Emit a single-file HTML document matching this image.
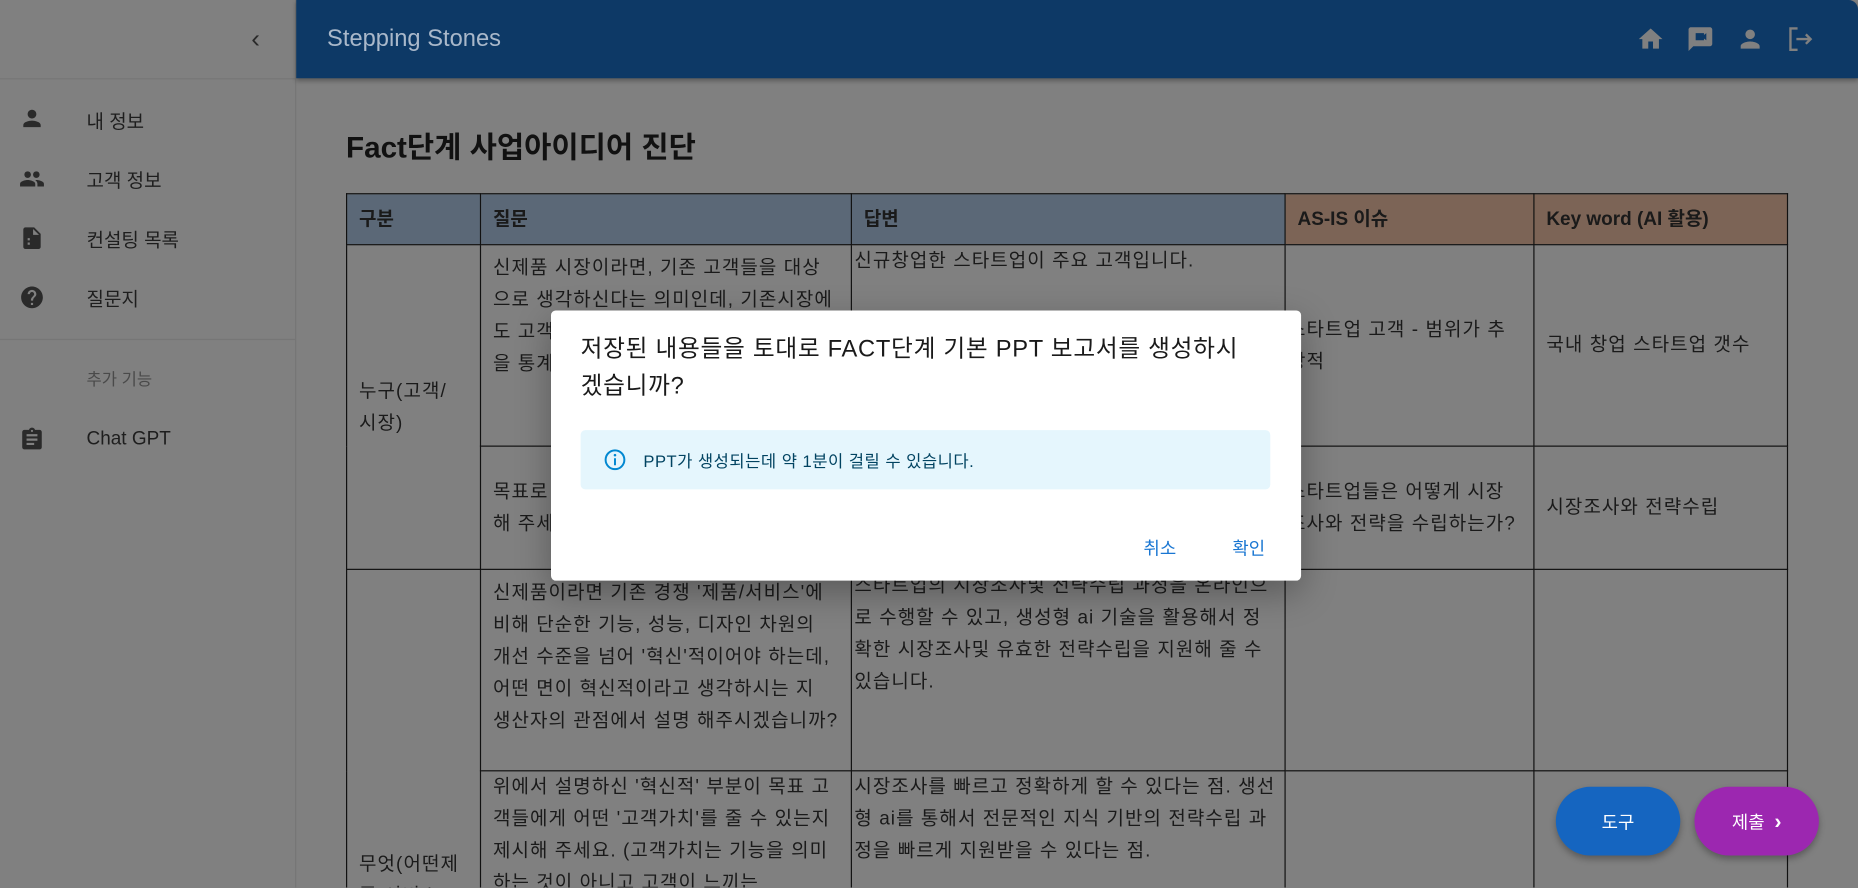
<!DOCTYPE html>
<html><head><meta charset="utf-8"><style>
html,body{margin:0;padding:0;width:1858px;height:887px;overflow:hidden;background:#808080;}
#w{position:absolute;left:0;top:0;width:1568px;height:749px;overflow:hidden;transform:scale(1.18495);transform-origin:0 0;font-family:"Liberation Sans","Noto Sans CJK KR",sans-serif;color:#1a1a1a;}
.abs{position:absolute}
#side{left:0;top:0;width:249px;height:749px;background:#808080;border-right:1px solid #767676;}
#bar{left:250px;top:0;width:1318px;height:66px;background:#0d3966;box-shadow:0 2px 4px rgba(0,0,0,.3);border-top-right-radius:8px}
.mi{position:absolute;left:73px;font-size:16px;color:#1e1e1e}
.ic{position:absolute;left:16px;width:22px;height:22px}
table{position:absolute;left:292px;top:163px;border-collapse:collapse;font-size:16px;line-height:27px;letter-spacing:0.9px;table-layout:fixed}
td,th{border:1px solid #111;vertical-align:top;padding:0 10px;text-align:left;overflow:hidden}
th{height:42px;vertical-align:middle;font-weight:bold;font-size:16px;letter-spacing:0}
.b{background:#5b6877}.p{background:#7c6456}
#dlg{left:465px;top:262px;width:633px;height:228px;background:#fff;border-radius:4px;box-shadow:0 10px 30px rgba(0,0,0,.3)}
.fab{position:absolute;top:664px;width:105px;height:58px;border-radius:29px;color:#fff;font-size:15px;display:flex;align-items:center;justify-content:center;box-shadow:0 3px 6px rgba(0,0,0,.3)}
</style></head><body><div id="w">
<div class="abs" id="side">
 <div class="abs" style="left:212px;top:20px;font-size:22px;color:#2a2a2a">&#8249;</div>
 <div class="abs" style="left:0;top:66px;width:249px;height:1px;background:#767676"></div>
 <svg class="ic" style="top:89px" viewBox="0 0 24 24"><path fill="#2a2a2a" d="M12 12c2.2 0 4-1.8 4-4s-1.8-4-4-4-4 1.8-4 4 1.8 4 4 4zm0 2c-2.7 0-8 1.3-8 4v2h16v-2c0-2.7-5.3-4-8-4z"/></svg>
 <div class="mi" style="top:89px">내 정보</div>
 <svg class="ic" style="top:140px" viewBox="0 0 24 24"><path fill="#2a2a2a" d="M16 11c1.7 0 3-1.3 3-3s-1.3-3-3-3-3 1.3-3 3 1.3 3 3 3zm-8 0c1.7 0 3-1.3 3-3S9.7 5 8 5 5 6.3 5 8s1.3 3 3 3zm0 2c-2.3 0-7 1.2-7 3.5V19h14v-2.5c0-2.3-4.7-3.5-7-3.5zm8 0c-.3 0-.6 0-1 .1 1.2.8 2 2 2 3.4V19h6v-2.5c0-2.3-4.700-3.5-7-3.5z"/></svg>
 <div class="mi" style="top:139px">고객 정보</div>
 <svg class="ic" style="top:190px" viewBox="0 0 24 24"><path fill="#2a2a2a" d="M14 2H6c-1.1 0-2 .9-2 2v16c0 1.1.9 2 2 2h12c1.1 0 2-.9 2-2V8l-6-6zm-1 7V3.5L18.5 9H13zM8 12h2v2H8zm0 4h2v2H8z"/></svg>
 <div class="mi" style="top:189px">컨설팅 목록</div>
 <svg class="ic" style="top:240px" viewBox="0 0 24 24"><path fill="#2a2a2a" d="M12 2C6.5 2 2 6.5 2 12s4.5 10 10 10 10-4.5 10-10S17.5 2 12 2zm1 17h-2v-2h2v2zm2.1-7.8l-.9.9C13.5 12.9 13 13.5 13 15h-2v-.5c0-1.100.4-2.100 1.2-2.8l1.2-1.3c.4-.4.6-.9.6-1.4 0-1.1-.9-2-2-2s-2 .9-2 2H8c0-2.2 1.8-4 4-4s4 1.8 4 4c0 .9-.4 1.7-.9 2.2z"/></svg>
 <div class="mi" style="top:239px">질문지</div>
 <div class="abs" style="left:0;top:286px;width:249px;height:1px;background:#767676"></div>
 <div class="mi" style="top:310px;font-size:14px;color:#4a4a4a">추가 기능</div>
 <svg class="ic" style="top:360px" viewBox="0 0 24 24"><path fill="#2a2a2a" d="M19 3h-4.2C14.4 1.8 13.3 1 12 1s-2.4.8-2.8 2H5c-1.1 0-2 .9-2 2v14c0 1.1.9 2 2 2h14c1.1 0 2-.9 2-2V5c0-1.1-.9-2-2-2zm-7 0c.6 0 1 .4 1 1s-.4 1-1 1-1-.4-1-1 .4-1 1-1zm2 14H7v-2h7v2zm3-4H7v-2h10v2zm0-4H7V7h10v2z"/></svg>
 <div class="mi" style="top:362px">Chat GPT</div>
</div>
<div class="abs" id="bar">
 <div class="abs" style="left:26px;top:22px;font-size:20px;color:#a9b8ca">Stepping Stones</div>
 <svg class="abs" style="left:1131px;top:21px" width="24" height="24" viewBox="0 0 24 24"><path fill="#808080" d="M10 20v-6h4v6h5v-8h3L12 3 2 12h3v8z"/></svg>
 <svg class="abs" style="left:1173px;top:21px" width="24" height="24" viewBox="0 0 24 24"><path fill="#808080" d="M20 2H4c-1.1 0-2 .9-2 2v18l4-4h14c1.1 0 2-.9 2-2V4c0-1.1-.9-2-2-2zM17 13l-2-1.5V13H8V7h7v1.5L17 7z" /></svg>
 <svg class="abs" style="left:1215px;top:21px" width="24" height="24" viewBox="0 0 24 24"><path fill="#808080" d="M12 12c2.2 0 4-1.8 4-4s-1.8-4-4-4-4 1.8-4 4 1.8 4 4 4zm0 2c-2.7 0-8 1.3-8 4v2h16v-2c0-2.7-5.3-4-8-4z"/></svg>
 <svg class="abs" style="left:1257px;top:21px" width="24" height="24" viewBox="0 0 24 24"><path fill="none" stroke="#808080" stroke-width="2" d="M10 3H4v18h6M9 12h12M17 8l4 4-4 4"/></svg>
</div>
<div class="abs" style="left:292px;top:105px;font-size:25px;font-weight:bold;color:#111">Fact단계 사업아이디어 진단</div>
<table>
<colgroup><col style="width:113px"><col style="width:313px"><col style="width:366px"><col style="width:210px"><col style="width:214px"></colgroup>
<tr><th class="b">구분</th><th class="b">질문</th><th class="b">답변</th><th class="p">AS-IS 이슈</th><th class="p">Key word (AI 활용)</th></tr>
<tr style="height:170px"><td rowspan="2" style="vertical-align:middle">누구(고객/<br>시장)</td><td style="padding-top:6px">신제품 시장이라면, 기존 고객들을 대상으로 생각하신다는 의미인데, 기존시장에도 고객이 있는데 이와 다르게 어떤 고객을 통계적인 수치로 제시해 주세요</td><td style="padding:0 2px">신규창업한 스타트업이 주요 고객입니다.</td><td style="vertical-align:middle;padding:0 12px 0 2px">스타트업 고객 - 범위가 추상적</td><td style="vertical-align:middle">국내 창업 스타트업 갯수</td></tr>
<tr style="height:104px"><td style="vertical-align:middle">목표로 하는 고객들의 pain point를 제시해 주세요</td><td></td><td style="vertical-align:middle;padding:0 12px 0 2px">스타트업들은 어떻게 시장조사와 전략을 수립하는가?</td><td style="vertical-align:middle">시장조사와 전략수립</td></tr>
<tr style="height:170px"><td rowspan="2" style="vertical-align:bottom">무엇(어떤제품/서비스/</td><td style="padding-top:6px">신제품이라면 기존 경쟁 '제품/서비스'에 비해 단순한 기능, 성능, 디자인 차원의 개선 수준을 넘어 '혁신'적이어야 하는데, 어떤 면이 혁신적이라고 생각하시는 지 생산자의 관점에서 설명 해주시겠습니까?</td><td style="padding:0 6px 0 2px">스타트업의 시장조사및 전략수립 과정을 온라인으로 수행할 수 있고, 생성형 ai 기술을 활용해서 정확한 시장조사및 유효한 전략수립을 지원해 줄 수 있습니다.</td><td></td><td></td></tr>
<tr style="height:120px"><td style="padding-top:0">위에서 설명하신 '혁신적' 부분이 목표 고객들에게 어떤 '고객가치'를 줄 수 있는지 제시해 주세요. (고객가치는 기능을 의미하는 것이 아니고 고객이 느끼는</td><td style="padding:0 6px 0 2px">시장조사를 빠르고 정확하게 할 수 있다는 점. 생선형 ai를 통해서 전문적인 지식 기반의 전략수립 과정을 빠르게 지원받을 수 있다는 점.</td><td></td><td></td></tr>
</table>
<div class="abs" id="dlg">
 <div class="abs" style="left:25px;top:18px;width:560px;font-size:20px;line-height:31px;letter-spacing:0.6px;color:#1a1a1a">저장된 내용들을 토대로 FACT단계 기본 PPT 보고서를 생성하시겠습니까?</div>
 <div class="abs" style="left:25px;top:101px;width:582px;height:50px;background:#e5f6fd;border-radius:4px">
  <svg class="abs" style="left:19px;top:15px" width="20" height="20" viewBox="0 0 24 24"><circle cx="12" cy="12" r="9.5" fill="none" stroke="#0288d1" stroke-width="2"/><path d="M12 10.5v7" stroke="#0288d1" stroke-width="2"/><circle cx="12" cy="7.3" r="1.3" fill="#0288d1"/></svg>
  <div class="abs" style="left:53px;top:16px;font-size:14px;letter-spacing:0.4px;color:#014361">PPT가 생성되는데 약 1분이 걸릴 수 있습니다.</div>
 </div>
 <div class="abs" style="left:500px;top:190px;font-size:15px;color:#1976d2">취소</div>
 <div class="abs" style="left:575px;top:190px;font-size:15px;color:#1976d2">확인</div>
</div>
<div class="fab" style="left:1313px;background:#1565c0">도구</div>
<div class="fab" style="left:1430px;background:#9c27b0">제출 &nbsp;<b style="font-size:18px">&#8250;</b></div>
</div></body></html>
